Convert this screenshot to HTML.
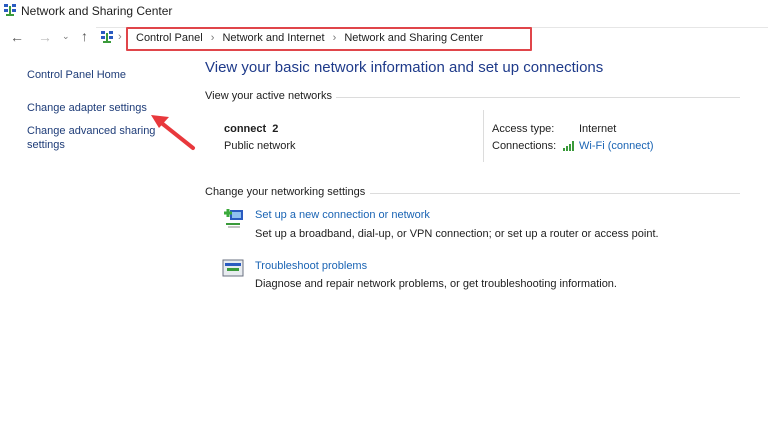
<!DOCTYPE html>
<html><head><style>
body{margin:0;width:768px;height:445px;background:#fff;font-family:"Liberation Sans",sans-serif;font-size:11px;color:#1e1e1e;position:relative;overflow:hidden}
.a{position:absolute;white-space:nowrap}
.lk{color:#1a64b4}
.nav{color:#1e3c78}
.hr{position:absolute;height:1px;background:#dcdcdc}
</style></head><body>
<svg class="a" style="left:3px;top:3px" width="14" height="14" viewBox="0 0 14 14"><rect x="1" y="1" width="4" height="3" fill="#2a5bc0"/><rect x="9" y="1" width="4" height="3" fill="#2a5bc0"/><rect x="1" y="6" width="4" height="3" fill="#2a5bc0"/><rect x="9" y="6" width="4" height="3" fill="#2a5bc0"/><rect x="6" y="3" width="2" height="8" fill="#3a9a3a"/><rect x="3" y="11" width="8" height="2" fill="#3a9a3a"/></svg>
<div class="a" style="left:21px;top:4px;font-size:12px">Network and Sharing Center</div>
<div class="a" style="left:10px;top:29px;font-size:14px;color:#555">←</div>
<div class="a" style="left:38px;top:29px;font-size:14px;color:#bbb">→</div>
<div class="a" style="left:62px;top:31px;font-size:9px;color:#777">⌄</div>
<div class="a" style="left:81px;top:28px;font-size:14px;color:#555">↑</div>
<svg class="a" style="left:100px;top:30px" width="14" height="14" viewBox="0 0 14 14"><rect x="1" y="1" width="4" height="3" fill="#2a5bc0"/><rect x="9" y="1" width="4" height="3" fill="#2a5bc0"/><rect x="1" y="6" width="4" height="3" fill="#2a5bc0"/><rect x="9" y="6" width="4" height="3" fill="#2a5bc0"/><rect x="6" y="3" width="2" height="8" fill="#3a9a3a"/><rect x="3" y="11" width="8" height="2" fill="#3a9a3a"/></svg>
<div class="a" style="left:118px;top:31px;color:#888">›</div>
<div class="a" style="left:96px;top:27px;width:672px;height:23px;border-top:1px solid #e6e6e6"></div>
<div class="a" style="left:126px;top:27px;width:402px;height:20px;border:2px solid #e0454a;border-radius:1px"></div>
<div class="a" style="left:136px;top:32px">Control Panel <span style="color:#777;margin:0 5px">›</span> Network and Internet <span style="color:#777;margin:0 5px">›</span> Network and Sharing Center</div>
<div class="a nav" style="left:27px;top:69px">Control Panel Home</div>
<div class="a nav" style="left:27px;top:102px">Change adapter settings</div>
<div class="a nav" style="left:27px;top:124px;line-height:14px">Change advanced sharing<br>settings</div>
<svg class="a" style="left:145px;top:108px" width="60" height="50"><line x1="48" y1="40" x2="14" y2="13" stroke="#e8383c" stroke-width="4" stroke-linecap="round"/><polygon points="6,7 24,9 14,20" fill="#e8383c"/></svg>
<div class="a" style="left:205px;top:59px;font-size:15px;color:#1e3a8a">View your basic network information and set up connections</div>
<div class="a" style="left:205px;top:90px">View your active networks</div>
<div class="hr" style="left:336px;top:97px;width:404px"></div>
<div class="a" style="left:483px;top:110px;width:1px;height:52px;background:#dcdcdc"></div>
<div class="a" style="left:224px;top:123px;font-weight:bold">connect&nbsp; 2</div>
<div class="a" style="left:224px;top:140px">Public network</div>
<div class="a" style="left:492px;top:123px">Access type:</div>
<div class="a" style="left:579px;top:123px">Internet</div>
<div class="a" style="left:492px;top:140px">Connections:</div>
<svg class="a" style="left:562px;top:141px" width="14" height="10"><rect x="1" y="7" width="2" height="3" fill="#3a9a3a"/><rect x="4" y="5" width="2" height="5" fill="#3a9a3a"/><rect x="7" y="3" width="2" height="7" fill="#3a9a3a"/><rect x="10" y="0" width="2" height="10" fill="#3a9a3a"/></svg>
<div class="a lk" style="left:579px;top:140px">Wi-Fi (connect)</div>
<div class="a" style="left:205px;top:186px">Change your networking settings</div>
<div class="hr" style="left:370px;top:193px;width:370px"></div>
<svg class="a" style="left:222px;top:207px" width="24" height="22"><rect x="8" y="3" width="13" height="10" fill="#2a5bc0"/><rect x="10" y="5" width="9" height="6" fill="#8fc0f0"/><path d="M2 6h8M6 2v8" stroke="#3aaa3a" stroke-width="3"/><path d="M4 17h14" stroke="#3a9a3a" stroke-width="2"/><path d="M6 20h12" stroke="#888" stroke-width="1"/></svg>
<div class="a lk" style="left:255px;top:209px">Set up a new connection or network</div>
<div class="a" style="left:255px;top:228px">Set up a broadband, dial-up, or VPN connection; or set up a router or access point.</div>
<svg class="a" style="left:222px;top:259px" width="22" height="18"><rect x="1" y="1" width="20" height="16" fill="#e8ecf0" stroke="#6a7080"/><rect x="3" y="4" width="16" height="3" fill="#2a5bc0"/><rect x="5" y="9" width="12" height="3" fill="#3a9a3a"/></svg>
<div class="a lk" style="left:255px;top:260px">Troubleshoot problems</div>
<div class="a" style="left:255px;top:278px">Diagnose and repair network problems, or get troubleshooting information.</div>
</body></html>
